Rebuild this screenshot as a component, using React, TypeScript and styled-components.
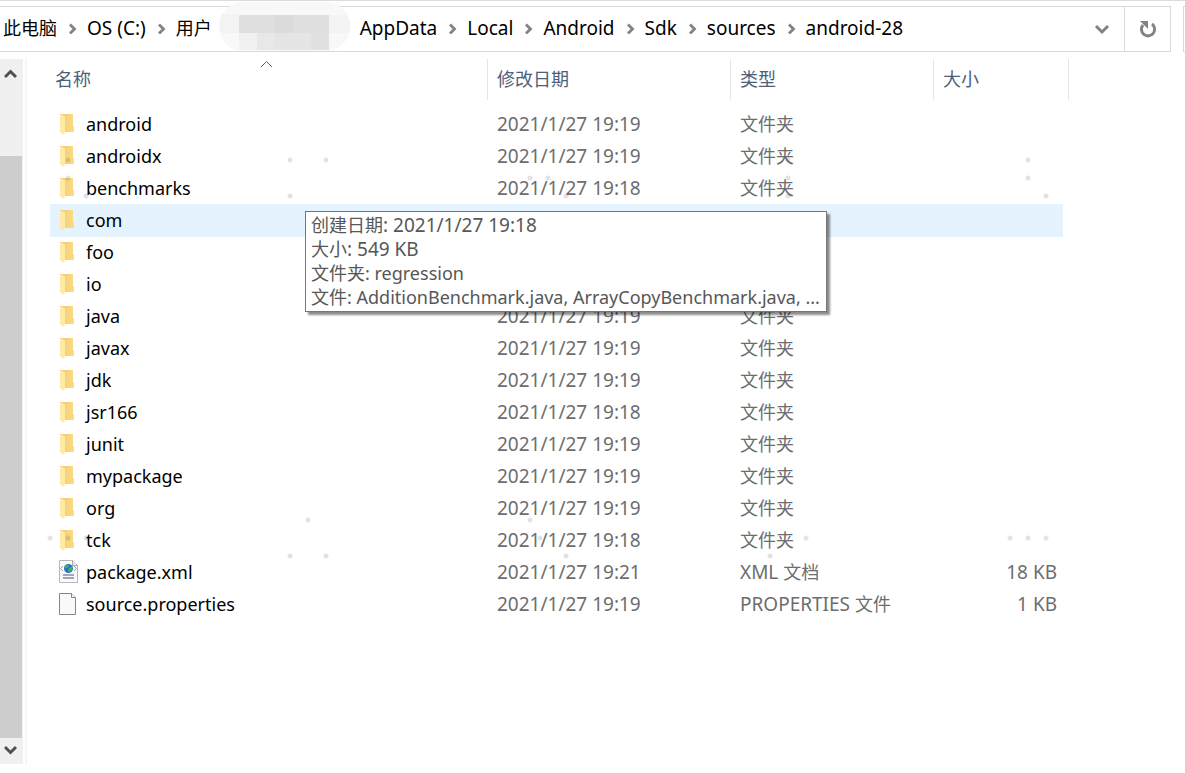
import React from 'react';
import styled, { createGlobalStyle } from 'styled-components';

const GlobalStyle = createGlobalStyle`
  * { box-sizing: border-box; }
  body { margin: 0; background: #fff; font-family: "Noto Sans", "Noto Sans CJK SC", sans-serif; font-size: 19px; line-height: 24px; color: #000; }
  button { font: inherit; color: inherit; background: none; border: 0; padding: 0; }
`;

const Cjk = styled.span`font-size: 18px;`;

/** Latin runs keep the base size, Chinese runs are set slightly smaller. */
function Mixed({ text }: { text: string }) {
  return (
    <>
      {text.split(/([\u4e00-\u9fff]+)/).filter(Boolean).map((run, i) =>
        /[\u4e00-\u9fff]/.test(run) ? <Cjk key={i}>{run}</Cjk> : <React.Fragment key={i}>{run}</React.Fragment>,
      )}
    </>
  );
}

const Window = styled.div`
  position: relative;
  display: flex;
  flex-direction: column;
  min-height: 100vh;
  border-top: 1px solid #dcdcdc;
  overflow: hidden;
`;

const TopBar = styled.header`
  display: flex;
  gap: 12px;
  padding-top: 5px;
`;

const AddressBar = styled.nav`
  flex: 1;
  display: flex;
  height: 46px;
  border: 1px solid #d9d9d9;
  border-left: 0;
`;

const Crumbs = styled.ol`
  flex: 1;
  display: flex;
  align-items: center;
  gap: 10px;
  list-style: none;
  margin: 0;
  padding: 0 0 2px 3px;
  white-space: nowrap;
`;

const Crumb = styled.li`
  display: flex;
  align-items: center;
  gap: 11px;
`;

const CrumbLink = styled.a`
  color: #000;
  text-decoration: none;
`;

const Redacted = styled.svg`
  display: block;
  margin: -8px 0 -4px -3px;
`;

const BarButton = styled.button<{ $divided?: boolean }>`
  display: flex;
  align-items: center;
  justify-content: center;
  width: 46px;
  border-left: ${p => (p.$divided ? '1px solid #d9d9d9' : '0')};
`;

const SearchEdge = styled.div`
  width: 2px;
  border: 1px solid #d9d9d9;
  border-right: 0;
`;

const Body = styled.div`
  flex: 1;
  display: flex;
  padding: 7px 0 9px;
`;

const ScrollBar = styled.div`
  display: flex;
  flex-direction: column;
  width: 23px;
  background: #f0f0f0;
  padding-right: 1px;
`;

const ScrollButton = styled.button`
  display: flex;
  align-items: center;
  justify-content: center;
  height: 28px;
`;

const Track = styled.div`
  flex: 1;
  display: flex;
  padding-top: 69px;
  margin-bottom: -2px;
`;

const Thumb = styled.div`
  flex: 1;
  background: #cdcdcd;
`;

const Splitter = styled.div`
  width: 2px;
  margin-left: 2px;
  background: #f6f6f6;
`;

const FilePane = styled.main`
  position: relative;
  flex: 1;
  padding-left: 23px;
`;

const FileTable = styled.table`
  table-layout: fixed;
  width: 1019px;
  border-collapse: separate;
  border-spacing: 0;
`;

const HeadCell = styled.th`
  position: relative;
  height: 41px;
  padding: 0 0 2px 9px;
  border-right: 1px solid #e5e5e5;
  font-weight: 400;
  text-align: left;
  color: #4c607a;
  &:first-child { padding-left: 5px; }
`;

const SortMark = styled.svg`
  position: absolute;
  top: 1px;
  left: 50%;
  margin-left: -9px;
`;

const SpacerRow = styled.tr`height: 8px;`;

const Cell = styled.td<{ $right?: boolean }>`
  height: 32px;
  padding: 0 ${p => (p.$right ? 6 : 0)}px 0 9px;
  color: #6d6d6d;
  text-align: ${p => (p.$right ? 'right' : 'left')};
  white-space: nowrap;
`;

const Row = styled.tr<{ $hot?: boolean }>`
  td:not(:last-child) {
    background: ${p => (p.$hot ? '#e5f3ff' : 'transparent')};
    box-shadow: ${p => (p.$hot ? '0 1px 0 #e5f3ff' : 'none')};
  }
`;

const NameCell = styled(Cell)`
  color: #000;
  font-size: 18px;
`;

const NameBox = styled.div`
  display: flex;
  align-items: center;
  gap: 7px;
`;

const Tip = styled.div`
  position: absolute;
  left: 278px;
  top: 152px;
  padding: 1px 6px 2px 5px;
  border: 1px solid #767676;
  background: #fff;
  color: #575757;
  box-shadow: 3px 3px 2px rgba(0, 0, 0, 0.45);
  white-space: nowrap;
`;

const TipLine = styled.div<{ $small?: boolean }>`
  height: 24px;
  font-size: ${p => (p.$small ? 18 : 19)}px;
`;

const Speckles = styled.svg`
  position: absolute;
  left: 0;
  top: -1px;
  pointer-events: none;
`;

const FolderIcon = () => (
  <svg width="20" height="24" viewBox="0 0 20 24" aria-hidden="true">
    <defs>
      <linearGradient id="fold" x1="0" x2="1"><stop offset="0" stopColor="#f0cd70" /><stop offset="1" stopColor="#fbdc85" /></linearGradient>
    </defs>
    <path d="M1 2h13v12l1 1v5H5z" fill="url(#fold)" />
    <path d="M1 2l5 2.500v14.500l-1 4-4-3z" fill="#ffe9a6" />
  </svg>
);

const XmlIcon = () => (
  <svg width="20" height="24" viewBox="0 0 20 24" aria-hidden="true">
    <path d="M.5 .5h13l5 5v17H.5z" fill="#fafafa" stroke="#b8b8b8" />
    <path d="M13.500 .5v5h5" fill="#eee" stroke="#a8a8a8" />
    <path d="M4 6l-2.500 2.500L4 11M15 6l2.500 2.500L15 11" fill="none" stroke="#9a9aa8" />
    <circle cx="9.500" cy="8.500" r="4.500" fill="#2473c8" />
    <path d="M6 7q1-3 4-2.500l-1 3-2 1zM10 8l3-1.500q1 3-2 5.500l-2-1z" fill="#43b649" />
    <path d="M4 15h11M4 18h11" stroke="#8b86a3" strokeWidth="1.500" />
  </svg>
);

const FileIcon = () => (
  <svg width="20" height="24" viewBox="0 0 20 24" aria-hidden="true">
    <path d="M.5 1.500h12l4 4v17H.5z" fill="#f8f9f9" stroke="#858585" />
    <path d="M12.500 1.500v4h4" fill="#fff" stroke="#858585" />
  </svg>
);

const Chevron = () => (
  <svg width="9" height="12" viewBox="0 0 9 12" aria-hidden="true">
    <path d="M2 2.500l4.500 4.500L2 11.500" fill="none" stroke="#838383" strokeWidth="2.800" />
  </svg>
);

const crumbs = ['此电脑', 'OS (C:)', '用户', '', 'AppData', 'Local', 'Android', 'Sdk', 'sources', 'android-28'];

type Entry = { name: string; time: string; type?: string; size?: string; icon?: 'xml' | 'file'; hot?: boolean };
const entries: Entry[] = [
  { name: 'android', time: '19:19' },
  { name: 'androidx', time: '19:19' },
  { name: 'benchmarks', time: '19:18' },
  { name: 'com', time: '19:18', hot: true },
  { name: 'foo', time: '19:19' },
  { name: 'io', time: '19:18' },
  { name: 'java', time: '19:19' },
  { name: 'javax', time: '19:19' },
  { name: 'jdk', time: '19:19' },
  { name: 'jsr166', time: '19:18' },
  { name: 'junit', time: '19:19' },
  { name: 'mypackage', time: '19:19' },
  { name: 'org', time: '19:19' },
  { name: 'tck', time: '19:18' },
  { name: 'package.xml', time: '19:21', type: 'XML 文档', size: '18 KB', icon: 'xml' },
  { name: 'source.properties', time: '19:19', type: 'PROPERTIES 文件', size: '1 KB', icon: 'file' },
];

const dots = [
  [68, 160], [68, 178], [86, 196], [290, 160], [326, 160], [290, 196], [530, 178], [548, 178], [566, 196],
  [788, 160], [788, 178], [788, 196], [1028, 160], [1028, 178], [1046, 196],
  [50, 538], [68, 538], [86, 538], [308, 520], [290, 556], [326, 556], [530, 520], [540, 538], [566, 556],
  [770, 556], [806, 538], [1010, 538], [1028, 538], [1046, 538],
];

export default function App() {
  return (
    <>
      <GlobalStyle />
      <Window>
        <TopBar>
          <AddressBar aria-label="地址">
            <Crumbs>
              {crumbs.map((c, i) =>
                c ? (
                  <Crumb key={i}>
                    <CrumbLink href="#"><Mixed text={c} /></CrumbLink>
                    {i < crumbs.length - 1 && c !== '用户' && <Chevron />}
                  </Crumb>
                ) : (
                  <Crumb key={i}>
                    <Redacted width="131" height="49" viewBox="0 0 131 49" aria-hidden="true">
                      <rect width="131" height="49" rx="24" fill="#f8f8f8" />
                      <path d="M1 18q1-3 2-6h17v19H2q-2-7-1-13z" fill="#f3f3f3" />
                      <path d="M110 13h18q5 9 2 18h-20z" fill="#f3f3f3" />
                      <rect x="20" y="13" width="90" height="18" fill="#dfdfdf" />
                      <rect x="56" y="13" width="18" height="18" fill="#dbdbdb" />
                      <rect x="20" y="31" width="18" height="17" fill="#f1f1f1" />
                      <rect x="38" y="31" width="18" height="17" fill="#e8e8e8" />
                      <rect x="56" y="31" width="36" height="17" fill="#e5e5e5" />
                      <rect x="92" y="31" width="18" height="17" fill="#e1e1e1" />
                    </Redacted>
                  </Crumb>
                ),
              )}
            </Crumbs>
            <BarButton aria-label="展开">
              <svg width="18" height="12" viewBox="0 0 18 12"><path d="M4 3l6 6 6-6" fill="none" stroke="#838383" strokeWidth="3" /></svg>
            </BarButton>
            <BarButton $divided aria-label="刷新">
              <svg width="18" height="18" viewBox="0 0 18 18">
                <path d="M13 4A6.600 6.600 0 1 1 4 5" fill="none" stroke="#838383" strokeWidth="3" />
                <path d="M1 1h8v8L6 6z" fill="#838383" />
              </svg>
            </BarButton>
          </AddressBar>
          <SearchEdge />
        </TopBar>
        <Body>
          <ScrollBar>
            <ScrollButton aria-label="向上滚动">
              <svg width="14" height="12" viewBox="0 0 14 12"><path d="M1 10l5.500-5.500L12 10" fill="none" stroke="#505050" strokeWidth="3" /></svg>
            </ScrollButton>
            <Track><Thumb /></Track>
            <ScrollButton aria-label="向下滚动">
              <svg width="14" height="12" viewBox="0 0 14 12"><path d="M1 3l5.500 5.500L12 3" fill="none" stroke="#505050" strokeWidth="3" /></svg>
            </ScrollButton>
          </ScrollBar>
          <Splitter />
          <FilePane>
            <FileTable>
              <colgroup>
                <col width="438" />
                <col width="243" />
                <col width="203" />
                <col width="129" />
                <col width="6" />
              </colgroup>
              <thead>
                <tr>
                  <HeadCell aria-sort="ascending">
                    <button><Mixed text="名称" /></button>
                    <SortMark width="13" height="8" viewBox="0 0 13 8"><path d="M1 7l5.500-5.500L12 7" fill="none" stroke="#5f5f5f" /></SortMark>
                  </HeadCell>
                  <HeadCell><button><Mixed text="修改日期" /></button></HeadCell>
                  <HeadCell><button><Mixed text="类型" /></button></HeadCell>
                  <HeadCell colSpan={2}><button><Mixed text="大小" /></button></HeadCell>
                </tr>
              </thead>
              <tbody>
                <SpacerRow aria-hidden="true" />
                {entries.map(e => (
                  <Row key={e.name} $hot={e.hot}>
                    <NameCell>
                      <NameBox>
                        {e.icon === 'xml' ? <XmlIcon /> : e.icon === 'file' ? <FileIcon /> : <FolderIcon />}
                        {e.name}
                      </NameBox>
                    </NameCell>
                    <Cell>2021/1/27 {e.time}</Cell>
                    <Cell><Mixed text={e.type ?? '文件夹'} /></Cell>
                    <Cell $right>{e.size}</Cell>
                    <td />
                  </Row>
                ))}
              </tbody>
            </FileTable>
            <Tip role="tooltip">
              <TipLine><Mixed text="创建日期: 2021/1/27 19:18" /></TipLine>
              <TipLine><Mixed text="大小: 549 KB" /></TipLine>
              <TipLine $small>文件夹: regression</TipLine>
              <TipLine $small>文件: AdditionBenchmark.java, ArrayCopyBenchmark.java, ...</TipLine>
            </Tip>
          </FilePane>
        </Body>
        <Speckles width="1100" height="600" aria-hidden="true">
          {dots.map(([x, y]) => <circle key={`${x}-${y}`} cx={x} cy={y} r="2.500" fill="#000" opacity="0.11" />)}
        </Speckles>
      </Window>
    </>
  );
}
